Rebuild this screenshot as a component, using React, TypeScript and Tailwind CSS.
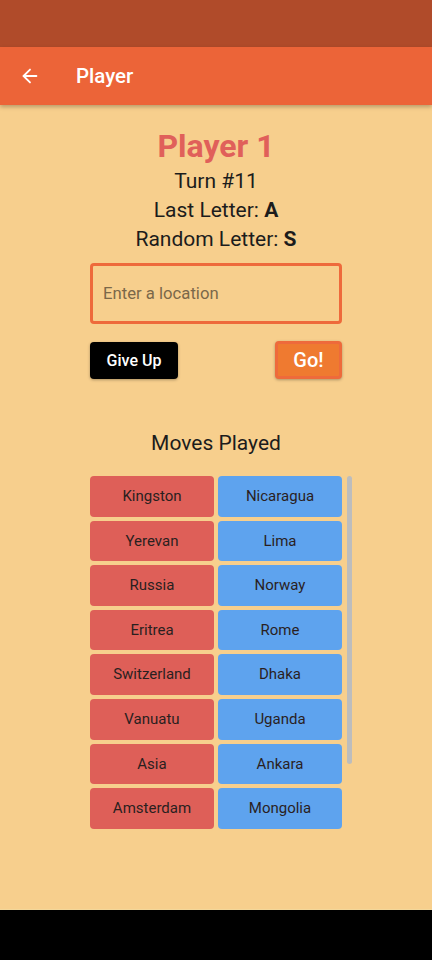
import React from "react";
import { ArrowLeft } from "lucide-react";

const moves: [string, string][] = [
  ["Kingston", "Nicaragua"],
  ["Yerevan", "Lima"],
  ["Russia", "Norway"],
  ["Eritrea", "Rome"],
  ["Switzerland", "Dhaka"],
  ["Vanuatu", "Uganda"],
  ["Asia", "Ankara"],
  ["Amsterdam", "Mongolia"],
];

const Cell: React.FC<{ name: string; side: "a" | "b" }> = ({ name, side }) => (
  <div
    className={`h-[40.6px] rounded-[4px] flex items-center justify-center text-[15px] text-[#2a1f1f] ${
      side === "a" ? "bg-[#de5f58]" : "bg-[#5ea3ee]"
    }`}
  >
    {name}
  </div>
);

export default function App() {
  return (
    <div className="w-[432px] h-[960px] flex flex-col bg-[#f7cf8d] font-['Roboto',sans-serif] overflow-hidden">
      {/* status bar */}
      <div className="h-[47px] bg-[#b04b2a]" />

      {/* app bar */}
      <header className="h-[58px] bg-[#ec6438] flex items-center shadow-[0_2px_4px_rgba(0,0,0,0.25)] relative z-10">
        <ArrowLeft className="ml-[19px] text-white" size={22} strokeWidth={2} />
        <h1 className="ml-[35px] text-white text-[20.5px] font-medium">Player</h1>
      </header>

      <main className="flex-1 flex flex-col items-center pt-[23px]">
        <h2 className="text-[32px] leading-[36px] font-bold text-[#e0605a]">Player 1</h2>
        <div className="mt-[3px] text-[21px] leading-[29px] text-[#1c1c1c] text-center">
          <p>Turn #11</p>
          <p>
            Last Letter: <b>A</b>
          </p>
          <p>
            Random Letter: <b>S</b>
          </p>
        </div>

        <div className="mt-[9px] w-[252px]">
          <input
            placeholder="Enter a location"
            className="w-full h-[61px] border-[3px] border-[#ee6a3b] rounded-[4px] px-[10px] bg-transparent text-[16.7px] placeholder:text-[#7b6849] outline-none"
          />
          <div className="mt-[18px] flex justify-between items-start">
            <button className="w-[88px] h-[37px] bg-black rounded-[4px] text-white text-[16px] font-medium shadow-[0_1px_3px_rgba(0,0,0,0.3)]">
              Give Up
            </button>
            <button className="w-[67px] h-[38px] -mt-[1px] bg-[#ef7a30] border-[3px] border-[#ee6a3b] rounded-[4px] text-white text-[20px] font-medium shadow-[0_1px_3px_rgba(0,0,0,0.3)]">
              Go!
            </button>
          </div>
        </div>

        <h3 className="mt-[50px] text-[21px] leading-[29px] text-[#1c1c1c]">Moves Played</h3>

        <div className="mt-[18px] flex ml-[10px]">
          <div className="grid grid-cols-[124px_124px] gap-x-[4px] gap-y-[4px]">
            {moves.map(([a, b]) => (
              <React.Fragment key={a}>
                <Cell name={a} side="a" />
                <Cell name={b} side="b" />
              </React.Fragment>
            ))}
          </div>
          {/* scroll thumb */}
          <div className="ml-[5px] w-[5px] h-[288px] rounded-full bg-[#bdbdbd]" />
        </div>
      </main>

      {/* nav bar */}
      <div className="h-[51px] bg-black border-t border-[#f3d79a]" />
    </div>
  );
}
